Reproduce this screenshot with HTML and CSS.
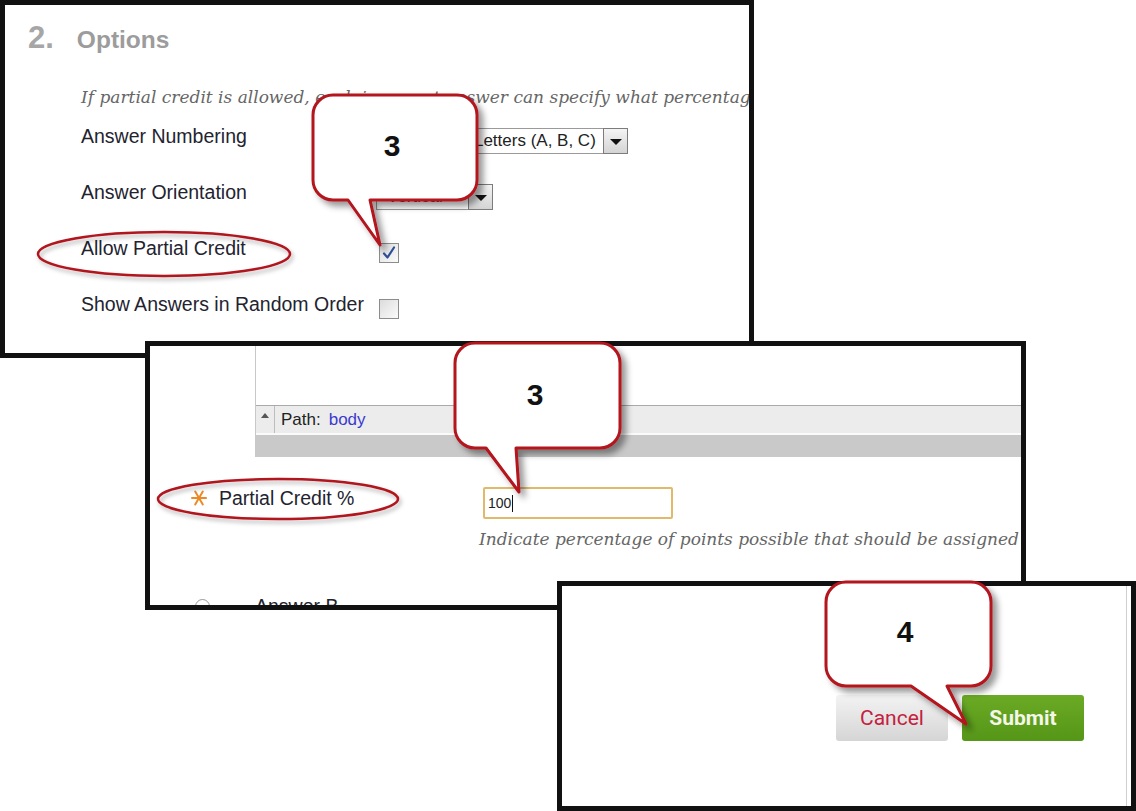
FILE: index.html
```html
<!DOCTYPE html>
<html lang="en">
<head>
<meta charset="utf-8">
<title>Partial credit steps</title>
<link rel="stylesheet" href="styles.css">
</head>
<body>
<div class="canvas">

  <section class="shot shot-options">
    <h2 class="opt-head"><span class="num">2.</span><span class="title">Options</span></h2>
    <div class="opt-body">
      <p class="hint intro">If partial credit is allowed, each incorrect answer can specify what percentage of the total points is awarded.</p>
      <div class="opt-row">
        <span class="lbl">Answer Numbering</span>
        <div class="sel sel-wide"><span class="sel-text">Uppercase Letters (A, B, C)</span><span class="sel-btn"><span class="tri"></span></span></div>
      </div>
      <div class="opt-row">
        <span class="lbl">Answer Orientation</span>
        <div class="sel sel-narrow"><span class="sel-text">Vertical</span><span class="sel-btn"><span class="tri"></span></span></div>
      </div>
      <div class="opt-row">
        <span class="lbl">Allow Partial Credit</span>
        <span class="chk">
          <svg class="chk-mark" viewBox="0 0 18 18" width="18" height="18"><path d="M4 9.5 L7.5 13.5 L14 3.5" fill="none" stroke="#2f4f9a" stroke-width="2.2" stroke-linecap="round" stroke-linejoin="round"/></svg>
        </span>
      </div>
      <div class="opt-row">
        <span class="lbl">Show Answers in Random Order</span>
        <span class="chk"></span>
      </div>
    </div>
  </section>

  <section class="shot shot-editor">
    <div class="editor">
      <div class="ed-area"></div>
      <div class="ed-path">
        <span class="ed-toggle"><span class="up-tri"></span></span>
        <span class="path-lbl">Path:</span><span class="path-val">body</span>
      </div>
      <div class="ed-gap"></div>
      <div class="ed-status"></div>
    </div>
    <div class="pc-row">
      <span class="req">
        <svg viewBox="0 0 18 18" width="18" height="18"><g stroke="#ec8a25" stroke-width="2" stroke-linecap="round"><path d="M2 9 H16"/><path d="M5.2 2.6 L12.8 15.4"/><path d="M12.8 2.6 L5.2 15.4"/></g></svg>
      </span>
      <span class="pc-lbl">Partial Credit %</span>
      <span class="pc-input">100<span class="caret"></span></span>
    </div>
    <p class="hint pc-hint">Indicate percentage of points possible that should be assigned when this answer is chosen.</p>
    <div class="ans-row">
      <span class="radio"></span>
      <span class="ans-lbl">Answer B</span>
    </div>
  </section>

  <section class="shot shot-submit">
    <div class="btns">
      <span class="btn btn-cancel">Cancel</span>
      <span class="btn btn-submit">Submit</span>
    </div>
  </section>

  <svg class="marks" width="1136" height="811" viewBox="0 0 1136 811">
    <defs>
      <filter id="sh" x="-20%" y="-20%" width="140%" height="140%">
        <feDropShadow dx="5" dy="5" stdDeviation="3" flood-color="#000" flood-opacity="0.4"/>
      </filter>
      <filter id="shs" x="-10%" y="-30%" width="120%" height="160%">
        <feDropShadow dx="2" dy="3" stdDeviation="2" flood-color="#000" flood-opacity="0.3"/>
      </filter>
    </defs>
    <g class="ring" filter="url(#shs)">
      <ellipse cx="164" cy="254" rx="126" ry="22"/>
      <ellipse cx="278" cy="499" rx="120" ry="20"/>
    </g>
    <g class="bubble" filter="url(#sh)">
      <path d="M333,95 H457 A20,20 0 0 1 477,115 V180 A20,20 0 0 1 457,200 H370 L380,245 L348,200 H333 A20,20 0 0 1 313,180 V115 A20,20 0 0 1 333,95 Z"/>
      <path d="M475,343 H600 A20,20 0 0 1 620,363 V428 A20,20 0 0 1 600,448 H516 L519,492 L486,448 H475 A20,20 0 0 1 455,428 V363 A20,20 0 0 1 475,343 Z"/>
      <path d="M846,582 H971 A20,20 0 0 1 991,602 V666 A20,20 0 0 1 971,686 H947 L966,724 L911,686 H846 A20,20 0 0 1 826,666 V602 A20,20 0 0 1 846,582 Z"/>
    </g>
    <g class="bubble-num">
      <text x="392" y="145">3</text>
      <text x="535" y="394">3</text>
      <text x="905" y="631">4</text>
    </g>
  </svg>

</div>
</body>
</html>
```

FILE: styles.css
```css
* { box-sizing: border-box; }

html, body {
  margin: 0;
  padding: 0;
  background: #fff;
}

.canvas {
  position: relative;
  width: 1136px;
  height: 811px;
  overflow: hidden;
  font-family: "Liberation Sans", Arial, sans-serif;
  color: #222;
}

.shot {
  position: absolute;
  border: 5px solid #111;
  background: #fff;
  overflow: hidden;
}

.shot-options { left: 0; top: 0; width: 754px; height: 358px; }
.shot-editor  { left: 145px; top: 341px; width: 881px; height: 269px; }
.shot-submit  { left: 557px; top: 581px; width: 579px; height: 230px;
  box-shadow: inset -4px 0 0 #fff, inset -5px 0 0 #cfcfcf; }

/* ---------- panel 1 ---------- */
.opt-head {
  margin: 0;
  padding: 17px 0 0 23px;
  display: flex;
  align-items: baseline;
  line-height: 32px;
  font-weight: bold;
}
.opt-head .num { font-size: 31px; color: #a6a6a6; }
.opt-head .title { font-size: 24.5px; color: #9c9c9c; margin-left: 23px; }

.opt-body { padding-left: 76px; }

.hint {
  margin: 0;
  font-family: "DejaVu Serif", "Liberation Serif", serif;
  font-style: italic;
  font-size: 17px;
  color: #666;
  white-space: nowrap;
  line-height: 24px;
}
.intro { margin-top: 29px; }

.opt-row {
  display: flex;
  align-items: center;
  height: 56px;
}
.lbl {
  flex: none;
  width: 295px;
  font-size: 19.5px;
  line-height: 22px;
  color: #232330;
  margin-top: -2px;
}

.sel {
  margin-top: 8px;
  height: 26px;
  display: flex;
  align-items: stretch;
  border: 1px solid #9a9a9a;
  background: #fff;
  font-size: 17px;
  color: #222;
}
.sel-wide { width: 252px; }
.sel-narrow { width: 117px; }
.sel-text {
  flex: 1;
  padding-left: 10px;
  line-height: 24px;
  white-space: nowrap;
  overflow: hidden;
}
.sel-btn {
  flex: none;
  width: 25px;
  border: 1px solid #7c7c7c;
  margin: -1px -1px -1px 0;
  background: linear-gradient(#f4f4f4, #d4d4d4);
  display: flex;
  align-items: center;
  justify-content: center;
}
.tri {
  width: 0;
  height: 0;
  border-left: 6px solid transparent;
  border-right: 6px solid transparent;
  border-top: 6px solid #111;
  margin-top: 2px;
}

.chk {
  margin-top: 8px;
  margin-left: 3px;
  width: 20px;
  height: 20px;
  border: 1px solid #8c8c8c;
  background: linear-gradient(135deg, #dcdcdc, #fbfbfb);
  display: flex;
  align-items: center;
  justify-content: center;
}

/* ---------- panel 2 ---------- */
.editor {
  margin-left: 105px;
  border-left: 1px solid #c8c8c8;
}
.ed-area { height: 59px; background: #fff; }
.ed-path {
  height: 28px;
  border-top: 1px solid #a9a9a9;
  background: #ececec;
  display: flex;
  align-items: center;
  font-size: 17px;
  line-height: 20px;
}
.ed-toggle {
  flex: none;
  width: 19px;
  height: 100%;
  border-right: 1px solid #bdbdbd;
  display: flex;
  align-items: center;
  justify-content: center;
  padding-bottom: 8px;
}
.up-tri {
  width: 0;
  height: 0;
  border-left: 4px solid transparent;
  border-right: 4px solid transparent;
  border-bottom: 5px solid #555;
}
.path-lbl { margin-left: 6px; color: #222; }
.path-val { margin-left: 8px; color: #3a3ad0; }
.ed-gap { height: 2px; background: #fafafa; }
.ed-status { height: 22px; background: #c9c9c9; }

.pc-row {
  margin-top: 30px;
  padding-left: 40px;
  display: flex;
  align-items: flex-start;
}
.req {
  flex: none;
  width: 29px;
  height: 22px;
  display: flex;
  align-items: center;
}
.pc-lbl {
  flex: none;
  width: 264px;
  font-size: 19.5px;
  line-height: 22px;
  color: #232330;
}
.pc-input {
  width: 190px;
  height: 32px;
  border: 2px solid #e0ba6a;
  border-radius: 2px;
  padding-left: 3px;
  display: flex;
  align-items: center;
  font-size: 14px;
  color: #222;
}
.caret {
  width: 1px;
  height: 17px;
  background: #111;
  margin-left: 1px;
}
.pc-hint {
  margin-top: 9px;
  margin-left: 329px;
  line-height: 22px;
}
.ans-row {
  margin-top: 45px;
  padding-left: 45px;
  display: flex;
  align-items: flex-start;
}
.radio {
  flex: none;
  width: 15px;
  height: 15px;
  border: 1px solid #999;
  border-radius: 50%;
  margin-top: 4px;
}
.ans-lbl {
  margin-left: 45px;
  font-size: 19.5px;
  line-height: 22px;
  color: #232330;
}

/* ---------- panel 3 ---------- */
.btns {
  display: flex;
  justify-content: flex-end;
  gap: 14px;
  padding: 109px 47px 0 0;
}
.btn {
  height: 46px;
  border-radius: 3px;
  display: flex;
  align-items: center;
  justify-content: center;
  font-family: Roboto, "Liberation Sans", sans-serif;
  font-size: 21px;
}
.btn-cancel {
  width: 112px;
  background: linear-gradient(#f3f3f3, #d5d5d5);
  color: #c4203f;
}
.btn-submit {
  width: 122px;
  background: linear-gradient(#6aaa24, #569618);
  color: #f4f6e8;
  font-weight: bold;
}

/* ---------- annotations ---------- */
.marks {
  position: absolute;
  left: 0;
  top: 0;
  pointer-events: none;
}
.ring ellipse {
  fill: none;
  stroke: #b0141f;
  stroke-width: 2.5;
}
.bubble path {
  fill: #fff;
  stroke: #b3121c;
  stroke-width: 3;
  stroke-linejoin: round;
}
.bubble-num text {
  font-family: "Liberation Sans", Arial, sans-serif;
  font-weight: bold;
  font-size: 30px;
  fill: #111;
  text-anchor: middle;
  dominant-baseline: central;
}
```
